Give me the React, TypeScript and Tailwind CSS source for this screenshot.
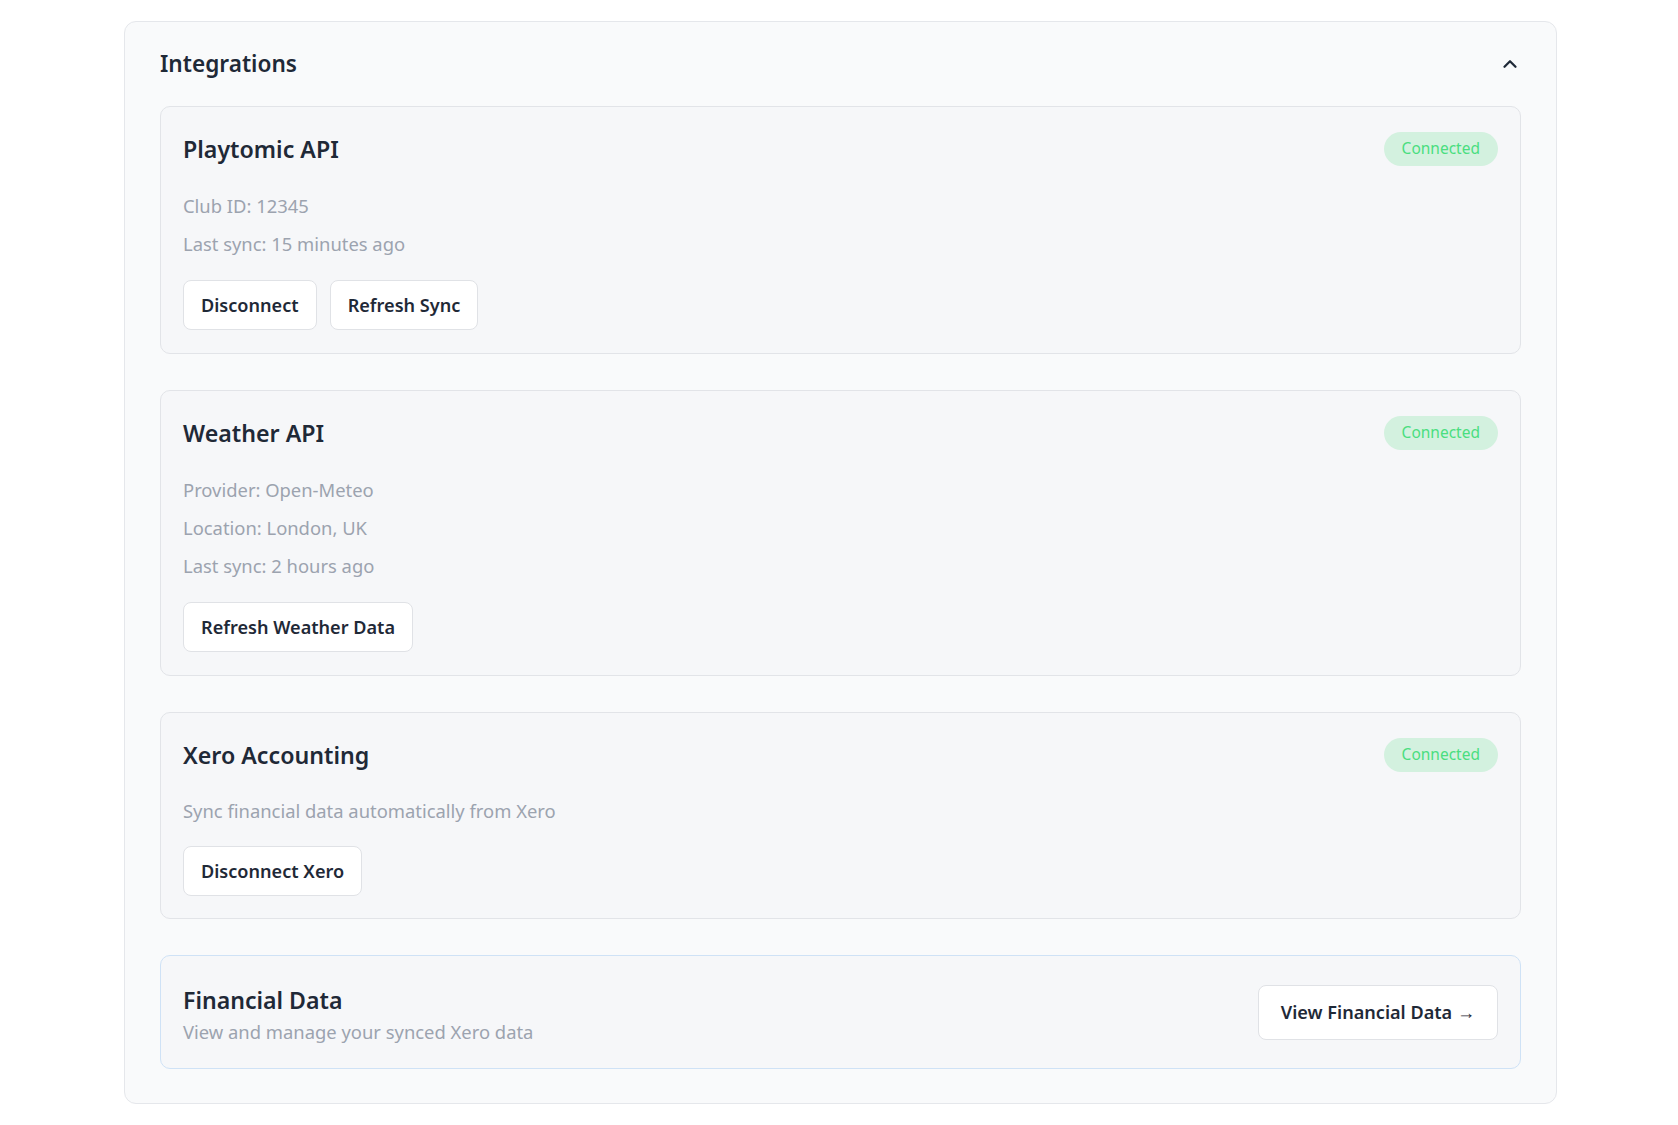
import React from "react";
import { ChevronUp } from "lucide-react";

function Badge() {
  return (
    <span className="flex h-[34px] items-center rounded-full bg-[#d3f1df] px-[18px] text-[15.5px] leading-none text-[#4ade80]">
      Connected
    </span>
  );
}

function Btn({ children }: { children: React.ReactNode }) {
  return (
    <button className="flex h-[50px] items-center rounded-[8px] border border-[#e0e2e6] bg-white px-[17px] text-[18.1px] font-semibold leading-none text-[#1f2937]">
      {children}
    </button>
  );
}

function Card({
  title,
  lines,
  buttons,
  linesMt,
  btnMt,
  pb,
}: {
  title: string;
  lines: string[];
  buttons: string[];
  linesMt: string;
  btnMt: string;
  pb: string;
}) {
  return (
    <div className={`rounded-[10px] border border-[#e2e4e8] bg-[#f6f7f9] px-[22px] pt-[22px] ${pb}`}>
      <div className="flex h-[40px] items-center justify-between">
        <h3 className="text-[23.2px] font-semibold leading-[40px] text-[#1f2937]">{title}</h3>
        <Badge />
      </div>
      <div className={`${linesMt} flex flex-col gap-[10px]`}>
        {lines.map((l) => (
          <p key={l} className="text-[18.4px] leading-[28px] text-[#9ca3af]">
            {l}
          </p>
        ))}
      </div>
      <div className={`${btnMt} flex gap-[13px]`}>
        {buttons.map((b) => (
          <Btn key={b}>{b}</Btn>
        ))}
      </div>
    </div>
  );
}

export default function App() {
  return (
    <div className="min-h-screen bg-white pt-[21px] pb-[21px] font-['Noto_Sans',sans-serif]">
      <div className="ml-[124px] w-[1433px] rounded-[12px] border border-[#e5e7eb] bg-[#f9fafb] px-[35px] pt-[22px] pb-[34px]">
        <div className="mb-[22px] flex h-[40px] items-center justify-between">
          <h2 className="text-[22.6px] font-semibold leading-[32px] text-[#1f2937]">Integrations</h2>
          <ChevronUp size={22} strokeWidth={2.5} className="text-[#1f2937]" />
        </div>
        <div className="flex flex-col gap-[36px]">
          <Card
            title="Playtomic API"
            lines={["Club ID: 12345", "Last sync: 15 minutes ago"]}
            buttons={["Disconnect", "Refresh Sync"]}
            linesMt="mt-[23px]"
            btnMt="mt-[22px]"
            pb="pb-[23px]"
          />
          <Card
            title="Weather API"
            lines={["Provider: Open-Meteo", "Location: London, UK", "Last sync: 2 hours ago"]}
            buttons={["Refresh Weather Data"]}
            linesMt="mt-[23px]"
            btnMt="mt-[22px]"
            pb="pb-[23px]"
          />
          <Card
            title="Xero Accounting"
            lines={["Sync financial data automatically from Xero"]}
            buttons={["Disconnect Xero"]}
            linesMt="mt-[22px]"
            btnMt="mt-[21px]"
            pb="pb-[22px]"
          />
          <div className="flex h-[114px] items-center justify-between rounded-[10px] border border-[#cfe2f6] bg-[#f6f7f9] px-[22px]">
            <div className="pt-[5px]">
              <h3 className="text-[23.1px] font-semibold leading-[32px] text-[#1f2937]">Financial Data</h3>
              <p className="mt-[2px] text-[18.4px] leading-[28px] text-[#9ca3af]">
                View and manage your synced Xero data
              </p>
            </div>
            <button className="flex h-[55px] items-center rounded-[8px] border border-[#e0e2e6] bg-white px-[22px] text-[18.1px] font-semibold leading-none text-[#1f2937]">
              View Financial Data →
            </button>
          </div>
        </div>
      </div>
    </div>
  );
}
